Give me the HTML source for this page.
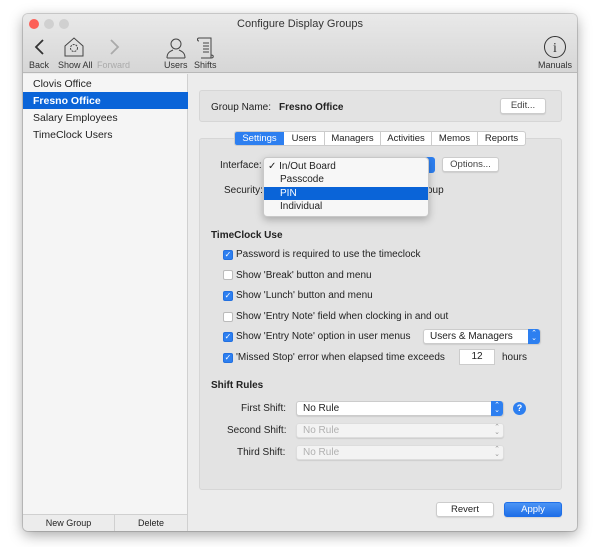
<!DOCTYPE html><html><head><style>
*{margin:0;padding:0;box-sizing:border-box}
body{width:600px;height:547px;background:#fff;font-family:"Liberation Sans",sans-serif;font-size:10px;color:#222;position:relative;overflow:hidden}
.a{position:absolute}
.win{left:23px;top:14px;width:554px;height:517px;background:#ececec;border-radius:5px;box-shadow:0 4px 14px rgba(0,0,0,.35),0 0 0 1px rgba(0,0,0,.15);overflow:hidden}
.cb{position:absolute;width:10px;height:10px;border-radius:2px;background:#fff;border:1px solid #bbb}
.cb.on{background:#2d7ff0;border-color:#2270e0;color:#fff;font-size:8px;line-height:8px;text-align:center}
.t{position:absolute;white-space:nowrap}
.btn{position:absolute;background:#fff;border:1px solid #ccc;border-radius:3px;text-align:center;box-shadow:0 1px 1px rgba(0,0,0,.1)}
.pop{position:absolute;background:#fff;border:1px solid #ccc;border-radius:3px;padding-left:6px;box-shadow:0 1px 1px rgba(0,0,0,.1)}
.pop .ar{position:absolute;right:0;top:-1px;bottom:-1px;width:12px;background:#2d7ff0;border-radius:0 3px 3px 0;color:#fff;font-size:7px;text-align:center;line-height:5px;padding-top:2px}
.dis{background:#f3f3f3;color:#b0b0b0;border-color:#ddd}
.dis .ar{background:none;color:#999}
</style></head><body>
<div class="a win">
 <div class="a" style="left:0;top:0;width:554px;height:59px;background:linear-gradient(#e9e9e9,#d6d6d6);border-bottom:1px solid #b8b8b8"></div>
 <div class="a" style="left:6px;top:5px;width:10px;height:10px;border-radius:50%;background:#fc5f57"></div>
 <div class="a" style="left:21px;top:5px;width:10px;height:10px;border-radius:50%;background:#d0d0d0"></div>
 <div class="a" style="left:36px;top:5px;width:10px;height:10px;border-radius:50%;background:#d0d0d0"></div>
 <div class="t" style="left:0;width:554px;top:4px;text-align:center;font-size:11px;color:#333">Configure Display Groups</div>
 <svg class="a" style="left:10px;top:24px" width="14" height="18"><path d="M10 2L3 9l7 7" stroke="#333" stroke-width="1.8" fill="none"/></svg>
 <svg class="a" style="left:40px;top:22px" width="22" height="22"><path d="M2 10L11 2l9 8v10H2z" stroke="#444" fill="none"/><circle cx="11" cy="12" r="3.5" stroke="#444" fill="none" stroke-dasharray="2 1"/></svg>
 <svg class="a" style="left:84px;top:24px" width="14" height="18"><path d="M4 2l7 7-7 7" stroke="#aaa" stroke-width="1.8" fill="none"/></svg>
 <svg class="a" style="left:142px;top:22px" width="22" height="24"><circle cx="11" cy="8" r="5" stroke="#444" fill="none"/><path d="M2 22c0-6 4-7 6-8M20 22c0-6-4-7-6-8M2 22h18" stroke="#444" fill="none"/></svg>
 <svg class="a" style="left:172px;top:21px" width="22" height="26"><path d="M4 3h12v20H6M4 3c-2 0-2 3 0 3M16 23c3 0 3-3 0-3M8 8h6M8 11h6M8 14h6M8 17h6" stroke="#444" fill="none"/></svg>
 <svg class="a" style="left:520px;top:21px" width="24" height="24"><circle cx="12" cy="12" r="10.5" stroke="#333" fill="none"/><text x="12" y="17" text-anchor="middle" font-family="Liberation Serif" font-size="14" fill="#333">i</text></svg>
 <div class="t" style="left:6px;top:46px;font-size:9px;color:#333">Back</div>
 <div class="t" style="left:35px;top:46px;font-size:9px;color:#333">Show All</div>
 <div class="t" style="left:74px;top:46px;font-size:9px;color:#aaa">Forward</div>
 <div class="t" style="left:141px;top:46px;font-size:9px;color:#333">Users</div>
 <div class="t" style="left:171px;top:46px;font-size:9px;color:#333">Shifts</div>
 <div class="t" style="left:515px;top:46px;font-size:9px;color:#333">Manuals</div>
 <!-- sidebar -->
 <div class="a" style="left:0;top:60px;width:165px;height:440px;background:#f5f5f5;border-right:1px solid #d0d0d0"></div>
 <div class="t" style="left:10px;top:64px;font-size:10.5px">Clovis Office</div>
 <div class="a" style="left:0;top:78px;width:165px;height:17px;background:#0a64d8"></div>
 <div class="t" style="left:10px;top:81px;font-size:10.5px;color:#fff;font-weight:bold">Fresno Office</div>
 <div class="t" style="left:10px;top:98px;font-size:10.5px">Salary Employees</div>
 <div class="t" style="left:10px;top:115px;font-size:10.5px">TimeClock Users</div>
 <div class="a" style="left:0;top:500px;width:165px;height:17px;background:#ececec;border-top:1px solid #d0d0d0;border-right:1px solid #d0d0d0"></div>
 <div class="a" style="left:91px;top:500px;width:1px;height:17px;background:#d0d0d0"></div>
 <div class="t" style="left:0;width:91px;top:504px;text-align:center;font-size:9px">New Group</div>
 <div class="t" style="left:91px;width:74px;top:504px;text-align:center;font-size:9px">Delete</div>
 <!-- group name -->
 <div class="a" style="left:176px;top:76px;width:363px;height:32px;background:#e3e3e3;border:1px solid #d6d6d6;border-radius:3px"></div>
 <div class="t" style="left:188px;top:88px;font-size:10px">Group Name:</div>
 <div class="t" style="left:256px;top:88px;font-size:10px;font-weight:bold">Fresno Office</div>
 <div class="btn" style="left:477px;top:84px;width:46px;height:16px;line-height:14px;font-size:9.5px;color:#444">Edit...</div>
 <!-- panel -->
 <div class="a" style="left:176px;top:124px;width:363px;height:352px;background:#e3e3e3;border:1px solid #d6d6d6;border-radius:3px"></div>
 <div class="a" style="left:211px;top:117px;width:292px;height:15px;background:#fff;border:1px solid #ccc;border-radius:3px;font-size:9.5px;display:flex;line-height:13px">
  <div style="width:49px;background:#2d7ff0;color:#fff;text-align:center;border-radius:2px 0 0 2px">Settings</div>
  <div style="width:41px;text-align:center;border-right:1px solid #ccc">Users</div>
  <div style="width:56px;text-align:center;border-right:1px solid #ccc">Managers</div>
  <div style="width:51px;text-align:center;border-right:1px solid #ccc">Activities</div>
  <div style="width:46px;text-align:center;border-right:1px solid #ccc">Memos</div>
  <div style="flex:1;text-align:center">Reports</div>
 </div>
 <div class="t" style="left:197px;top:146px;font-size:10px">Interface:</div>
 <div class="a" style="left:400px;top:143px;width:12px;height:16px;background:#2d7ff0;border-radius:0 3px 3px 0"></div>
 <div class="btn" style="left:419px;top:143px;width:57px;height:15px;line-height:13px;font-size:9.5px;color:#444">Options...</div>
 <div class="t" style="left:201px;top:171px;font-size:10px">Security:</div>
 <div class="t" style="left:404px;top:171px;font-size:10px">oup</div>
 <div class="a" style="left:240px;top:143px;width:166px;height:60px;background:#f7f7f7;border:1px solid #c8c8c8;border-radius:4px;box-shadow:0 3px 8px rgba(0,0,0,.25);font-size:10px"></div>
 <div class="t" style="left:245px;top:147px;font-size:10px">✓ In/Out Board</div>
 <div class="t" style="left:257px;top:160px;font-size:10px">Passcode</div>
 <div class="a" style="left:241px;top:173px;width:164px;height:13px;background:#0a64d8"></div>
 <div class="t" style="left:257px;top:174px;font-size:10px;color:#fff">PIN</div>
 <div class="t" style="left:257px;top:187px;font-size:10px">Individual</div>
 <div class="t" style="left:188px;top:216px;font-size:10px;font-weight:bold">TimeClock Use</div>
 <div class="cb on" style="left:200px;top:236px">✓</div><div class="t" style="left:213px;top:235px">Password is required to use the timeclock</div>
 <div class="cb" style="left:200px;top:256px"></div><div class="t" style="left:213px;top:256px">Show 'Break' button and menu</div>
 <div class="cb on" style="left:200px;top:277px">✓</div><div class="t" style="left:213px;top:276px">Show 'Lunch' button and menu</div>
 <div class="cb" style="left:200px;top:298px"></div><div class="t" style="left:213px;top:297px">Show 'Entry Note' field when clocking in and out</div>
 <div class="cb on" style="left:200px;top:318px">✓</div><div class="t" style="left:213px;top:317px">Show 'Entry Note' option in user menus</div>
 <div class="pop" style="left:400px;top:315px;width:118px;height:15px;line-height:13px">Users &amp; Managers<div class="ar">⌃<br>⌄</div></div>
 <div class="cb on" style="left:200px;top:339px">✓</div><div class="t" style="left:213px;top:338px">'Missed Stop' error when elapsed time exceeds</div>
 <div class="a" style="left:436px;top:335px;width:36px;height:16px;background:#fff;border:1px solid #ccc;text-align:center;line-height:14px">12</div>
 <div class="t" style="left:479px;top:338px">hours</div>
 <div class="t" style="left:188px;top:366px;font-weight:bold">Shift Rules</div>
 <div class="t" style="left:218px;top:389px">First Shift:</div>
 <div class="pop" style="left:273px;top:387px;width:208px;height:15px;line-height:13px">No Rule<div class="ar">⌃<br>⌄</div></div>
 <div class="a" style="left:490px;top:388px;width:13px;height:13px;border-radius:50%;background:#2d7ff0;color:#fff;font-weight:bold;font-size:9px;text-align:center;line-height:13px">?</div>
 <div class="t" style="left:204px;top:411px">Second Shift:</div>
 <div class="pop dis" style="left:273px;top:409px;width:208px;height:15px;line-height:13px">No Rule<div class="ar">⌃<br>⌄</div></div>
 <div class="t" style="left:214px;top:433px">Third Shift:</div>
 <div class="pop dis" style="left:273px;top:431px;width:208px;height:15px;line-height:13px">No Rule<div class="ar">⌃<br>⌄</div></div>
 <div class="btn" style="left:413px;top:488px;width:58px;height:15px;line-height:13px;font-size:9.5px">Revert</div>
 <div class="btn" style="left:481px;top:488px;width:58px;height:15px;line-height:13px;font-size:9.5px;background:linear-gradient(#4b94f5,#1f6fe8);color:#fff;border-color:#1f6fe8">Apply</div>
</div>
</body></html>
